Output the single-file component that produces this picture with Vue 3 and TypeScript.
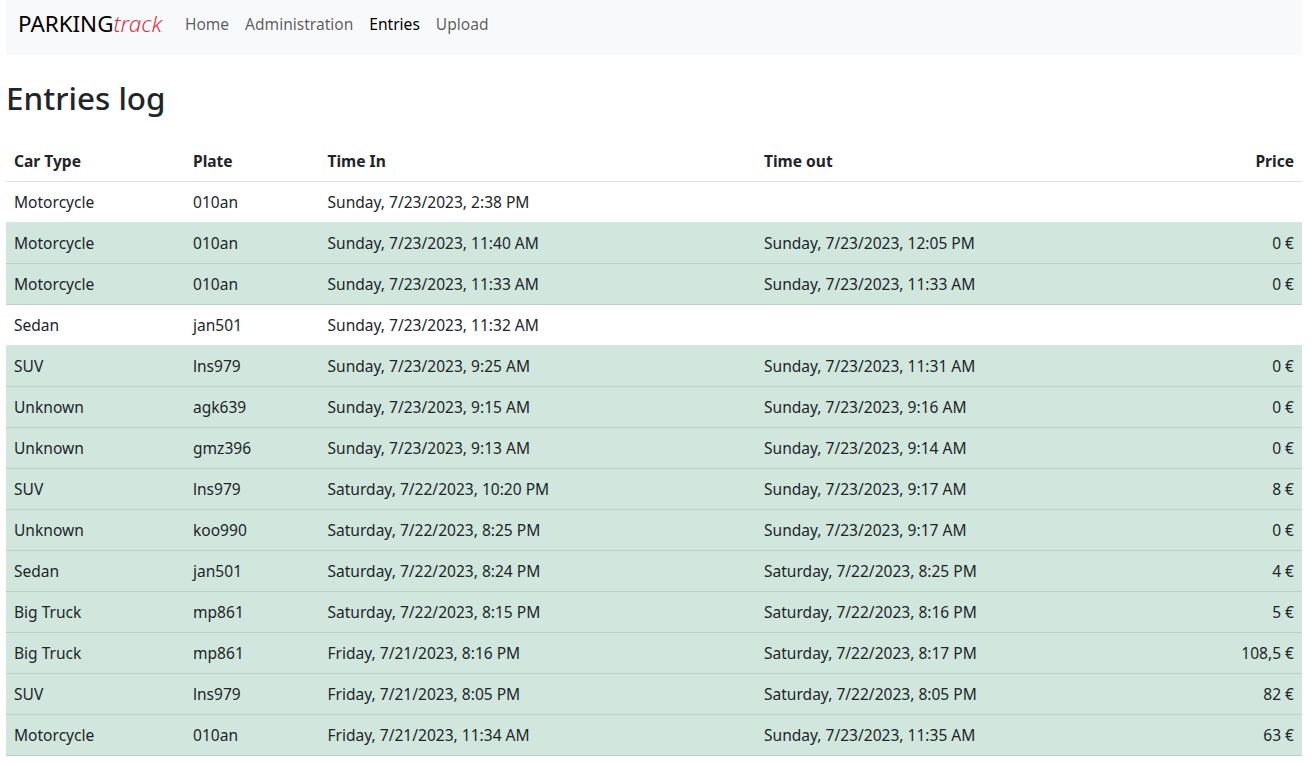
<script setup lang="ts">
interface Entry { type: string; plate: string; timeIn: string; timeOut: string; price: string; done: boolean }
const row = (type: string, plate: string, timeIn: string, timeOut = '', price = ''): Entry => ({ type, plate, timeIn, timeOut, price, done: timeOut !== '' })
const entries: Entry[] = [
  row('Motorcycle', '010an', 'Sunday, 7/23/2023, 2:38 PM'),
  row('Motorcycle', '010an', 'Sunday, 7/23/2023, 11:40 AM', 'Sunday, 7/23/2023, 12:05 PM', '0 €'),
  row('Motorcycle', '010an', 'Sunday, 7/23/2023, 11:33 AM', 'Sunday, 7/23/2023, 11:33 AM', '0 €'),
  row('Sedan', 'jan501', 'Sunday, 7/23/2023, 11:32 AM'),
  row('SUV', 'lns979', 'Sunday, 7/23/2023, 9:25 AM', 'Sunday, 7/23/2023, 11:31 AM', '0 €'),
  row('Unknown', 'agk639', 'Sunday, 7/23/2023, 9:15 AM', 'Sunday, 7/23/2023, 9:16 AM', '0 €'),
  row('Unknown', 'gmz396', 'Sunday, 7/23/2023, 9:13 AM', 'Sunday, 7/23/2023, 9:14 AM', '0 €'),
  row('SUV', 'lns979', 'Saturday, 7/22/2023, 10:20 PM', 'Sunday, 7/23/2023, 9:17 AM', '8 €'),
  row('Unknown', 'koo990', 'Saturday, 7/22/2023, 8:25 PM', 'Sunday, 7/23/2023, 9:17 AM', '0 €'),
  row('Sedan', 'jan501', 'Saturday, 7/22/2023, 8:24 PM', 'Saturday, 7/22/2023, 8:25 PM', '4 €'),
  row('Big Truck', 'mp861', 'Saturday, 7/22/2023, 8:15 PM', 'Saturday, 7/22/2023, 8:16 PM', '5 €'),
  row('Big Truck', 'mp861', 'Friday, 7/21/2023, 8:16 PM', 'Saturday, 7/22/2023, 8:17 PM', '108,5 €'),
  row('SUV', 'lns979', 'Friday, 7/21/2023, 8:05 PM', 'Saturday, 7/22/2023, 8:05 PM', '82 €'),
  row('Motorcycle', '010an', 'Friday, 7/21/2023, 11:34 AM', 'Sunday, 7/23/2023, 11:35 AM', '63 €'),
]
const links = ['Home', 'Administration', 'Entries', 'Upload']
</script>

<template>
  <div class="page">
    <nav class="navbar">
      <a class="brand">PARKING<em>track</em></a>
      <a v-for="l in links" :key="l" class="link" :class="{ active: l === 'Entries' }">{{ l }}</a>
    </nav>
    <h1>Entries log</h1>
    <table>
      <colgroup>
        <col class="c1" /><col class="c2" /><col class="c3" /><col class="c4" /><col />
      </colgroup>
      <thead>
        <tr><th>Car Type</th><th>Plate</th><th>Time In</th><th>Time out</th><th class="end">Price</th></tr>
      </thead>
      <tbody>
        <tr v-for="(e, i) in entries" :key="i" :class="{ done: e.done }">
          <td>{{ e.type }}</td><td>{{ e.plate }}</td><td>{{ e.timeIn }}</td><td>{{ e.timeOut }}</td><td class="end">{{ e.price }}</td>
        </tr>
      </tbody>
    </table>
  </div>
</template>

<style>
body { margin: 0; background: #fff; }
</style>

<style scoped>
.page {
  padding: 0 12px 0 6px;
  font-family: "Noto Sans", "Open Sans", sans-serif;
  font-size: 15.55px;
  line-height: 24px;
  color: #212529;
}
.navbar {
  height: 55px;
  box-sizing: border-box;
  background: #f8f9fa;
  display: flex;
  align-items: center;
  padding: 0 12px 8px;
}
.brand { font-size: 22.4px; color: #000; margin-right: 15px; }
.brand em { color: #dc3545; font-weight: 300; }
.link { padding: 8px; color: rgba(0,0,0,.65); }
.link.active { color: #000; }
h1 { margin: 23px 0 23px; font-size: 31.4px; line-height: 40px; font-weight: 500; }
table { width: 100%; border-collapse: collapse; table-layout: fixed; }
.c1 { width: 179px; } .c2 { width: 134.5px; } .c3 { width: 436.5px; } .c4 { width: 300px; }
th, td { padding: 8px; border-bottom: 1px solid #dee2e6; text-align: left; height: 24px; }
th { font-weight: 700; }
tr.done td { background: #d1e7dd; border-bottom-color: #bcd0c7; }
.end { text-align: right; }
</style>
